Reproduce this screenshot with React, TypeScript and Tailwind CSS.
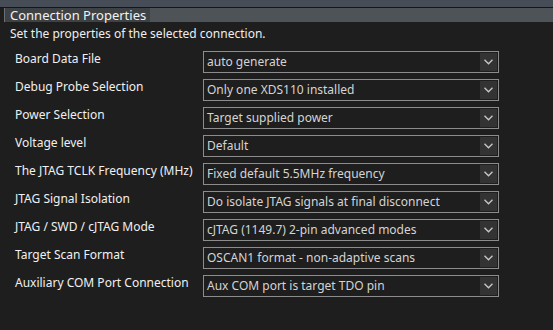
import React from 'react'

const rows: [string, string][] = [
  ['Board Data File', 'auto generate'],
  ['Debug Probe Selection', 'Only one XDS110 installed'],
  ['Power Selection', 'Target supplied power'],
  ['Voltage level', 'Default'],
  ['The JTAG TCLK Frequency (MHz)', 'Fixed default 5.5MHz frequency'],
  ['JTAG Signal Isolation', 'Do isolate JTAG signals at final disconnect'],
  ['JTAG / SWD / cJTAG Mode', 'cJTAG (1149.7) 2-pin advanced modes'],
  ['Target Scan Format', 'OSCAN1 format - non-adaptive scans'],
  ['Auxiliary COM Port Connection', 'Aux COM port is target TDO pin'],
]

const Chevron = () => (
  <svg width="9" height="6" viewBox="0 0 9 6" fill="none">
    <path d="M0.5 0.8 L4.5 4.8 L8.5 0.8" stroke="#c8c8c8" strokeWidth="1.3" />
  </svg>
)

export default function App() {
  return (
    <div
      className="w-[553px] h-[330px] bg-[#1e1e1e] overflow-hidden text-[12px]"
      style={{ fontFamily: '"Noto Sans", "Open Sans", sans-serif' }}
    >
      <div className="h-[7px] bg-[#474d56]" />
      <div className="h-px bg-[#161616]" />
      <div className="flex h-[14px] bg-[#4e5357] border-l-[4px] border-[#1e1e1e]">
        <div className="w-px bg-[#6c7074]" />
        <div className="flex items-center bg-[#3e4245] pl-[5px] pr-[4px] text-[13px] text-[#f2f2f2] leading-none">
          Connection Properties
        </div>
      </div>
      <div className="pl-[10px] pt-[4px] text-[#eeeeee] leading-[16px] whitespace-nowrap">
        Set the properties of the selected connection.
      </div>
      <div className="flex flex-col gap-[6px] pt-[9px]">
        {rows.map(([label, value]) => (
          <div key={label} className="flex items-start h-[22px]">
            <div className="w-[203px] pl-[15px] text-[#f0f0f0] leading-[16px] whitespace-nowrap">{label}</div>
            <div className="flex w-[296px] h-[22px] border border-[#8c8c8c] bg-[#1e1e1e]">
              <div className="flex-1 pl-[3px] flex items-center text-[#d4d4d4] leading-none whitespace-nowrap">
                {value}
              </div>
              <div className="w-[17px] my-px mr-px bg-[#333333] flex items-center justify-center">
                <Chevron />
              </div>
            </div>
          </div>
        ))}
      </div>
    </div>
  )
}
